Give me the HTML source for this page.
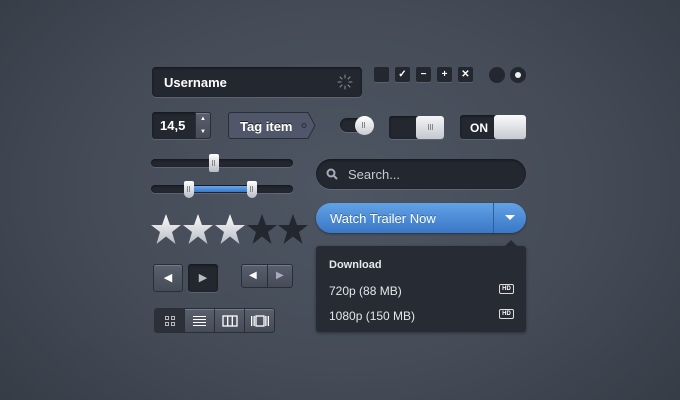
<!DOCTYPE html>
<html><head><style>
*{margin:0;padding:0;box-sizing:border-box}
body{width:680px;height:400px;overflow:hidden;font-family:"Liberation Sans",sans-serif;
background:radial-gradient(ellipse 440px 320px at 340px 190px,#4e5663 0%,#454c58 55%,#373d47 100%);position:relative;color:#fff}
.a{position:absolute}
.dark{background:#23272f;box-shadow:inset 0 1px 2px rgba(0,0,0,.5),0 1px 0 rgba(255,255,255,.12)}
.btn{background:linear-gradient(#59616e,#454b57);border:1px solid #2a2e36;box-shadow:inset 0 1px 0 rgba(255,255,255,.18);border-radius:3px}
.cb{width:15px;height:15px;top:67px;border-radius:2px;background:#23272f;box-shadow:0 1px 0 rgba(255,255,255,.1);color:#fff;font-size:10px;font-weight:bold;text-align:center;line-height:15px}
.t{font-size:13px;font-weight:bold}
.row{font-size:12px;color:#e4e6ea}
.hd{position:absolute;right:12px;width:15px;height:10px;border:1px solid #ddd;border-radius:2px;font-size:6px;font-weight:bold;text-align:center;line-height:8px}
.vb{top:0;height:24px;width:30px;border-right:1px solid #2a2e36}
.grip{position:absolute;width:4px;height:6px;background:repeating-linear-gradient(90deg,#888 0 1px,transparent 1px 2px)}
</style></head><body>
<div class="a dark" style="left:152px;top:67px;width:210px;height:30px;border-radius:4px"></div>
<div class="a t" style="left:164px;top:75px">Username</div>
<svg class="a" style="left:337px;top:74px" width="16" height="16" viewBox="0 0 16 16" stroke="#8a8f99" stroke-width="1" stroke-linecap="round"><path d="M8 1v3M8 12v3M1 8h3M12 8h3M3 3l2 2M11 11l2 2M3 13l2-2M11 5l2-2" /></svg>
<div class="a cb" style="left:374px"></div>
<div class="a cb" style="left:395px">✓</div>
<div class="a cb" style="left:416px">−</div>
<div class="a cb" style="left:437px">+</div>
<div class="a cb" style="left:458px">✕</div>
<div class="a" style="left:489px;top:67px;width:16px;height:16px;border-radius:50%;background:#23272f"></div>
<div class="a" style="left:510px;top:67px;width:16px;height:16px;border-radius:50%;background:#23272f"></div>
<div class="a" style="left:515px;top:72px;width:6px;height:6px;border-radius:50%;background:#eee"></div>
<div class="a dark" style="left:152px;top:112px;width:59px;height:27px;border-radius:3px"></div>
<div class="a t" style="left:160px;top:118px">14,5</div>
<div class="a btn" style="left:195px;top:112px;width:16px;height:27px;border-radius:0 3px 3px 0;font-size:6px;text-align:center;line-height:13px">▲<br>▼</div>
<svg class="a" style="left:228px;top:112px" width="90" height="28"><path d="M3 .5H80L87 13.5L80 26.5H3A2.5 2.5 0 0 1 .5 24V3A2.5 2.5 0 0 1 3 .5Z" fill="#50576a" stroke="#2a2e36"/><circle cx="76" cy="13.5" r="2" fill="none" stroke="#2a2e36"/></svg>
<div class="a t" style="left:240px;top:119px;font-size:13px;text-shadow:0 -1px 0 #222">Tag item</div>
<div class="a dark" style="left:340px;top:118px;width:30px;height:14px;border-radius:7px"></div>
<div class="a" style="left:355px;top:116px;width:19px;height:19px;border-radius:50%;background:linear-gradient(#fff,#c9ccd2)"><div class="grip" style="left:7px;top:6px"></div></div>
<div class="a dark" style="left:389px;top:116px;width:55px;height:23px;border-radius:3px"></div>
<div class="a" style="left:416px;top:116px;width:28px;height:23px;border-radius:3px;background:linear-gradient(#f4f5f7,#c4c8cf)"><div class="grip" style="left:12px;top:8px;width:6px"></div></div>
<div class="a dark" style="left:460px;top:115px;width:66px;height:24px;border-radius:3px"></div>
<div class="a t" style="left:470px;top:121px;font-size:12px">ON</div>
<div class="a" style="left:494px;top:115px;width:32px;height:24px;border-radius:3px;background:linear-gradient(#fafafa,#c6cad1)"></div>
<div class="a dark" style="left:151px;top:159px;width:142px;height:8px;border-radius:4px"></div>
<div class="a" style="left:209px;top:154px;width:10px;height:18px;border-radius:2px;background:linear-gradient(#fff,#b8bcc4)"><div class="grip" style="left:3px;top:6px"></div></div>
<div class="a dark" style="left:151px;top:185px;width:142px;height:8px;border-radius:4px"></div>
<div class="a" style="left:190px;top:186px;width:62px;height:6px;background:linear-gradient(#6aa6e8,#3a78c8)"></div>
<div class="a" style="left:184px;top:181px;width:10px;height:17px;border-radius:2px 2px 5px 5px;background:linear-gradient(#fff,#b8bcc4)"><div class="grip" style="left:3px;top:5px"></div></div>
<div class="a" style="left:247px;top:181px;width:10px;height:17px;border-radius:2px 2px 5px 5px;background:linear-gradient(#fff,#b8bcc4)"><div class="grip" style="left:3px;top:5px"></div></div>
<svg class="a" style="left:150px;top:213px" width="160" height="34">
<defs><linearGradient id="g" x1="0" y1="0" x2="0" y2="1"><stop offset="0" stop-color="#fafbfc"/><stop offset="1" stop-color="#b9bdc4"/></linearGradient>
<path id="s" d="M16 1L20 12H31L22 19L25.5 31L16 23.5L6.5 31L10 19L1 12H12Z"/></defs>
<use href="#s" fill="url(#g)"/><use href="#s" x="32" fill="url(#g)"/><use href="#s" x="64" fill="url(#g)"/><use href="#s" x="96" fill="#23272f"/><use href="#s" x="127" fill="#23272f"/></svg>
<div class="a dark" style="left:316px;top:159px;width:210px;height:30px;border-radius:15px"></div>
<svg class="a" style="left:326px;top:168px" width="12" height="12" fill="none" stroke="#aab" stroke-width="2"><circle cx="5" cy="5" r="3.5"/><path d="M8 8l3 3"/></svg>
<div class="a" style="left:348px;top:167px;font-size:13px;color:#c5c9d0">Search...</div>
<div class="a" style="left:316px;top:203px;width:210px;height:30px;border-radius:15px;background:linear-gradient(#62a2e6,#3a77c6);box-shadow:0 1px 2px rgba(0,0,0,.4)"></div>
<div class="a" style="left:493px;top:203px;width:1px;height:30px;background:#2c5ea0"></div>
<div class="a" style="left:330px;top:211px;font-size:13px;color:#fff;text-shadow:0 -1px 0 rgba(0,0,0,.3)">Watch Trailer Now</div>
<div class="a" style="left:505px;top:215px;border:5px solid transparent;border-top:5px solid #fff;border-bottom:0"></div>
<div class="a" style="left:505px;top:240px;border:6px solid transparent;border-bottom:6px solid #272b33;border-top:0"></div>
<div class="a" style="left:316px;top:246px;width:210px;height:86px;border-radius:3px;background:#272b33;box-shadow:0 1px 3px rgba(0,0,0,.4)"></div>
<div class="a" style="left:329px;top:259px;font-size:11px;font-weight:bold;color:#e8eaee">Download</div>
<div class="a" style="left:316px;top:282px;width:210px"><span class="row" style="margin-left:13px">720p (88 MB)</span><div class="hd" style="top:2px">HD</div></div>
<div class="a" style="left:316px;top:307px;width:210px"><span class="row" style="margin-left:13px">1080p (150 MB)</span><div class="hd" style="top:2px">HD</div></div>
<div class="a btn" style="left:153px;top:264px;width:30px;height:28px;font-size:11px;text-align:center;line-height:26px">◀</div>
<div class="a dark" style="left:188px;top:264px;width:30px;height:28px;border-radius:3px;font-size:11px;text-align:center;line-height:28px;color:#bbb">▶</div>
<div class="a btn" style="left:241px;top:264px;width:52px;height:24px;font-size:10px;line-height:22px"><span style="position:absolute;left:7px">◀</span><span style="position:absolute;left:25px;top:0;width:1px;height:22px;background:#2a2e36"></span><span style="position:absolute;left:34px;color:#aab">▶</span></div>
<div class="a btn" style="left:154px;top:308px;width:121px;height:25px;overflow:hidden">
<div class="a vb" style="left:0;background:#2b3039"></div><div class="a vb" style="left:30px"></div><div class="a vb" style="left:60px"></div>
<svg class="a" style="left:9px;top:6px" width="12" height="12" fill="none" stroke="#bbb"><rect x="1.5" y="1.5" width="3" height="3"/><rect x="7.5" y="1.5" width="3" height="3"/><rect x="1.5" y="7.5" width="3" height="3"/><rect x="7.5" y="7.5" width="3" height="3"/></svg>
<svg class="a" style="left:38px;top:6px" width="14" height="12" stroke="#fff"><path d="M0 1.5h13M0 4.5h13M0 7.5h13M0 10.5h13"/></svg>
<svg class="a" style="left:67px;top:6px" width="16" height="12" fill="none" stroke="#fff" stroke-width="1.3"><rect x="1" y="1" width="14" height="10"/><path d="M5.7 1v10M10.3 1v10"/></svg>
<svg class="a" style="left:96px;top:6px" width="18" height="12" fill="#fff"><rect x="0" y="1" width="1.3" height="10"/><rect x="2.5" y="1" width="1.3" height="10"/><rect x="5" y="1" width="8" height="10" fill="none" stroke="#fff" stroke-width="1.3"/><rect x="14.2" y="1" width="1.3" height="10"/><rect x="16.7" y="1" width="1.3" height="10"/></svg>
</div>
</body></html>
